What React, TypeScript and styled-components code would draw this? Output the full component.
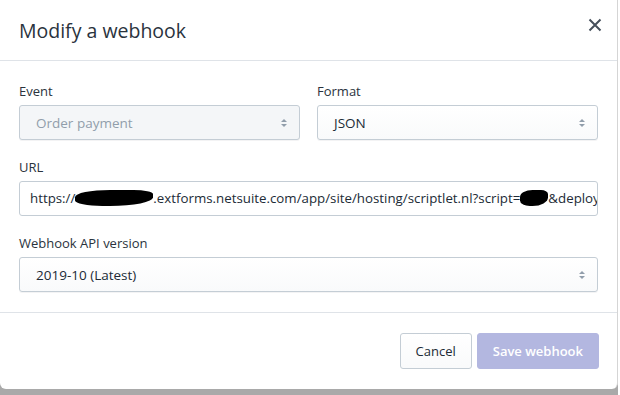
import React from 'react';
import styled, { createGlobalStyle } from 'styled-components';

const GlobalStyle = createGlobalStyle`
  html, body {
    margin: 0;
    padding: 0;
    background: #a9a9a9;
    font-family: "Open Sans", "Noto Sans", sans-serif;
  }
`;

const Page = styled.div`
  width: 620px;
  height: 395px;
  display: flex;
  align-items: flex-start;
  background: linear-gradient(to right, #a9a9a9 618px, #fff 618px);
`;

const ModalBox = styled.div`
  width: 617px;
  height: 389px;
  background: #fff;
  border-right: 1px solid #d5d5d5;
  border-radius: 0 0 6px 6px;
  display: flex;
  flex-direction: column;
  color: #212b36;
`;

const Header = styled.header`
  height: 61px;
  box-sizing: border-box;
  padding: 0 19px;
  display: flex;
  align-items: center;
  justify-content: space-between;
  border-bottom: 1px solid #dfe3e8;
`;

const Title = styled.h2`
  margin: 0;
  font-size: 19.5px;
  font-weight: 400;
  color: #2a333d;
`;

const CloseButton = styled.button`
  background: none;
  border: none;
  padding: 0;
  width: 20px;
  height: 20px;
  margin-right: -7px;
  margin-top: -10px;
  display: flex;
  align-items: center;
  justify-content: center;
  cursor: pointer;
`;

const Body = styled.div`
  padding: 21px 19px 20px 19px;
  display: flex;
  flex-direction: column;
  gap: 18px;
  border-bottom: 1px solid #dfe3e8;
`;

const Row = styled.div`
  display: grid;
  grid-template-columns: 1fr 1fr;
  gap: 17px;
`;

const Field = styled.div`
  display: flex;
  flex-direction: column;
  gap: 5px;
`;

const Label = styled.label`
  font-size: 13px;
  line-height: 18px;
  color: #2a333d;
`;

const Control = styled.div<{ $disabled?: boolean }>`
  height: 35px;
  box-sizing: border-box;
  border: 1px solid #c4cdd5;
  border-radius: 3px;
  display: flex;
  align-items: center;
  justify-content: space-between;
  padding: 0 11px 0 16px;
  font-size: 13.5px;
  color: ${(p) => (p.$disabled ? '#919eab' : '#212b36')};
  background: ${(p) =>
    p.$disabled ? '#f4f6f8' : 'linear-gradient(to bottom, #fff, #f9fafb)'};
  box-shadow: 0 1px 0 rgba(22, 29, 37, 0.05);
`;

const UrlInput = styled.div`
  height: 35px;
  box-sizing: border-box;
  border: 1px solid #c4cdd5;
  border-radius: 3px;
  padding: 0 10px;
  font-size: 13.3px;
  line-height: 33px;
  color: #212b36;
  white-space: nowrap;
  overflow: hidden;
  background: #fff;
`;

const Redacted = styled.span<{ $w: number }>`
  display: inline-block;
  width: ${(p) => p.$w}px;
  height: 16px;
  background: #000;
  border-radius: 45% 25% 55% 35%;
  vertical-align: middle;
  margin-top: -2px;
`;

const Footer = styled.footer`
  flex: 1;
  display: flex;
  justify-content: flex-end;
  align-items: center;
  gap: 5px;
  padding: 0 18px 0 0;
`;

const Button = styled.button<{ $primary?: boolean }>`
  height: 36px;
  box-sizing: border-box;
  border-radius: 3px;
  font-family: inherit;
  font-size: 13px;
  padding: 0 15px;
  border: 1px solid ${(p) => (p.$primary ? '#b3b7e0' : '#c4cdd5')};
  background: ${(p) => (p.$primary ? '#b3b7e0' : 'linear-gradient(to bottom, #fff, #f9fafb)')};
  color: ${(p) => (p.$primary ? '#fff' : '#212b36')};
  font-weight: ${(p) => (p.$primary ? 600 : 400)};
`;

const Arrows = () => (
  <svg width="8" height="12" viewBox="0 0 8 12">
    <path d="M4 2 L7 5 H1 Z" fill="#919eab" />
    <path d="M4 10 L7 7 H1 Z" fill="#919eab" />
  </svg>
);

const CloseIcon = () => (
  <svg width="14" height="14" viewBox="0 0 14 14">
    <path d="M1.5 1.5 L12.5 12.5 M12.5 1.5 L1.5 12.5" stroke="#454f5b" strokeWidth="2" />
  </svg>
);

export default function App() {
  return (
    <>
      <GlobalStyle />
      <Page>
        <ModalBox>
          <Header>
            <Title>Modify a webhook</Title>
            <CloseButton aria-label="Close">
              <CloseIcon />
            </CloseButton>
          </Header>
          <Body>
            <Row>
              <Field>
                <Label>Event</Label>
                <Control $disabled>
                  <span>Order payment</span>
                  <Arrows />
                </Control>
              </Field>
              <Field>
                <Label>Format</Label>
                <Control>
                  <span>JSON</span>
                  <Arrows />
                </Control>
              </Field>
            </Row>
            <Field>
              <Label>URL</Label>
              <UrlInput>
                https://<Redacted $w={78} />.extforms.netsuite.com/app/site/hosting/scriptlet.nl?script=<Redacted $w={28} />&amp;deploy
              </UrlInput>
            </Field>
            <Field>
              <Label>Webhook API version</Label>
              <Control>
                <span>2019-10 (Latest)</span>
                <Arrows />
              </Control>
            </Field>
          </Body>
          <Footer>
            <Button>Cancel</Button>
            <Button $primary>Save webhook</Button>
          </Footer>
        </ModalBox>
      </Page>
    </>
  );
}
